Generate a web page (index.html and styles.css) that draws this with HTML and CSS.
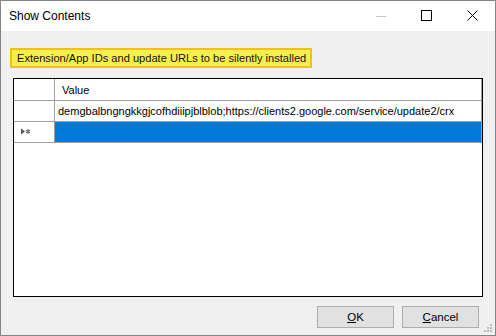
FILE: index.html
```html
<!DOCTYPE html>
<html>
<head>
<meta charset="utf-8">
<link rel="stylesheet" href="styles.css">
</head>
<body>
<div class="window">
  <div class="titlebar">
    <span class="title">Show Contents</span>
    <div class="caption-buttons">
      <span class="cap cap-min"><svg width="10" height="10" viewBox="0 0 10 10"><line x1="0" y1="5.5" x2="10" y2="5.5" stroke="#c4c4c4" stroke-width="1"/></svg></span>
      <span class="cap cap-max"><svg width="11" height="11" viewBox="0 0 11 11"><rect x="0.5" y="0.5" width="10" height="10" fill="none" stroke="#000" stroke-width="1"/></svg></span>
      <span class="cap cap-close"><svg width="11" height="11" viewBox="0 0 11 11"><path d="M0.5 0.5 L10.5 10.5 M10.5 0.5 L0.5 10.5" stroke="#000" stroke-width="1"/></svg></span>
    </div>
  </div>
  <div class="client">
    <div class="label">Extension/App IDs and update URLs to be silently installed</div>
    <div class="grid">
      <div class="row header">
        <div class="rowhead"></div>
        <div class="cell">Value</div>
      </div>
      <div class="row">
        <div class="rowhead"></div>
        <div class="cell data">demgbalbngngkkgjcofhdiiipjblblob;https://clients2.google.com/service/update2/crx</div>
      </div>
      <div class="row newrow">
        <div class="rowhead"><svg width="10" height="8" viewBox="0 0 10 8"><path d="M0 0.5 L4 3.5 L0 6.5 Z" fill="#555"/><path d="M7 1 L7 6 M4.8 2.2 L9.2 4.8 M9.2 2.2 L4.8 4.8" stroke="#666" stroke-width="1.1"/></svg></div>
        <div class="cell selected"></div>
      </div>
    </div>
    <div class="buttons">
      <button class="btn"><u>O</u>K</button>
      <button class="btn"><u>C</u>ancel</button>
    </div>
    <svg class="grip" width="9" height="9" viewBox="0 0 9 9">
      <rect x="6" y="0" width="2" height="2" fill="#bdbdbd"/>
      <rect x="3" y="3" width="2" height="2" fill="#bdbdbd"/>
      <rect x="6" y="3" width="2" height="2" fill="#bdbdbd"/>
      <rect x="0" y="6" width="2" height="2" fill="#bdbdbd"/>
      <rect x="3" y="6" width="2" height="2" fill="#bdbdbd"/>
      <rect x="6" y="6" width="2" height="2" fill="#bdbdbd"/>
    </svg>
  </div>
</div>
</body>
</html>
```
FILE: styles.css
```css
html, body {
  margin: 0;
  padding: 0;
  background: #fff;
}
body {
  font-family: "Liberation Sans", Arial, sans-serif;
  font-size: 11px;
  color: #000;
}
.window {
  width: 496px;
  height: 336px;
  box-sizing: border-box;
  border: 1px solid #858585;
  display: flex;
  flex-direction: column;
}
.titlebar {
  height: 30px;
  background: #fff;
  display: flex;
  align-items: center;
  position: relative;
}
.title {
  margin-left: 8px;
  margin-top: -1px;
  font-size: 12px;
}
.caption-buttons {
  margin-left: auto;
  display: flex;
  align-items: center;
  height: 100%;
}
.cap {
  display: flex;
  align-items: center;
  justify-content: center;
  width: 46px;
  height: 100%;
}
.cap svg { display: block; }
.cap-min { width: 44px; margin-top: -1px; }
.cap-max { margin-top: -1px; }
.cap-close { margin-top: -1px; }
.client {
  flex: 1;
  background: #f0f0f0;
  display: flex;
  flex-direction: column;
  align-items: flex-start;
  position: relative;
}
.label {
  margin-top: 17px;
  margin-left: 9px;
  height: 16px;
  line-height: 16px;
  padding: 0 4px 0 5px;
  background: #f4ef4c;
  border: 2px solid #eec21a;
  color: #1a1200;
  font-size: 11.1px;
}
.grid {
  margin-top: 10px;
  margin-left: 12px;
  width: 470px;
  height: 219px;
  box-sizing: border-box;
  border: 1px solid #000;
  background: #fff;
  display: flex;
  flex-direction: column;
}
.row {
  display: flex;
  height: 21px;
  border-bottom: 1px solid #a0a0a0;
  width: 468px;
  box-sizing: border-box;
}
.row.header { height: 22px; }
.rowhead {
  width: 41px;
  border-right: 1px solid #a0a0a0;
  display: flex;
  align-items: center;
  padding-left: 7px;
  box-sizing: border-box;
  flex: none;
}
.rowhead svg { display: block; }
.cell {
  flex: 1;
  display: flex;
  align-items: center;
  border-right: 1px solid #a0a0a0;
}
.header .cell { padding-left: 7px; }
.cell.data { padding-left: 3px; white-space: nowrap; font-size: 11px; }
.cell.selected {
  background: #0078d7;
}
.buttons {
  align-self: flex-end;
  margin-top: 9px;
  margin-right: 16px;
  display: flex;
  gap: 8px;
}
.btn {
  width: 77px;
  height: 22px;
  box-sizing: border-box;
  border: 1px solid #adadad;
  background: #e1e1e1;
  font-family: "Liberation Sans", Arial, sans-serif;
  font-size: 11.5px;
  color: #000;
  padding: 0;
  margin: 0;
}
.grip {
  position: absolute;
  right: 2px;
  bottom: 2px;
}
```
